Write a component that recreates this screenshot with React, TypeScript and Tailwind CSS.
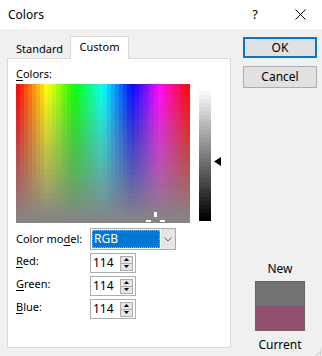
import React from 'react';

const font = { fontFamily: '"Noto Sans", "Open Sans", sans-serif' };

// hue/saturation field, drawn as blocks like the Windows picker
const Spectrum: React.FC = () => {
  const cols = 44;
  const rows = 23;
  const w = 174 / cols;
  const h = 139 / rows;
  const cells: React.ReactNode[] = [];
  for (let r = 0; r < rows; r++) {
    for (let c = 0; c < cols; c++) {
      const hue = (c / (cols - 1)) * 360;
      const sat = 100 - (r / (rows - 1)) * 100;
      cells.push(
        <rect
          key={`${r}-${c}`}
          x={c * w}
          y={r * h}
          width={w + 0.5}
          height={h + 0.5}
          fill={`hsl(${hue} ${sat}% 52%)`}
        />
      );
    }
  }
  return (
    <div className="relative w-[174px] h-[139px]">
      <svg width="174" height="139" viewBox="0 0 174 139" shapeRendering="crispEdges" className="block">
        {cells}
      </svg>
      {/* crosshair */}
      <div className="absolute left-[138px] top-[128px] w-[3px] h-[5px] bg-white" />
      <div className="absolute left-[130px] top-[136px] w-[5px] h-[2px] bg-white" />
      <div className="absolute left-[144px] top-[136px] w-[5px] h-[2px] bg-white" />
    </div>
  );
};

const LumBar: React.FC = () => {
  const bands = 34;
  const bh = 134 / bands;
  return (
    <svg width="12" height="134" viewBox="0 0 12 134" shapeRendering="crispEdges" className="block">
      {Array.from({ length: bands }).map((_, i) => {
        const v = Math.round(255 - (i / (bands - 1)) * 255);
        return <rect key={i} x={0} y={i * bh} width={12} height={bh + 0.5} fill={`rgb(${v},${v},${v})`} />;
      })}
    </svg>
  );
};

const Spin: React.FC<{ value: string }> = ({ value }) => (
  <div className="w-[46px] h-[20px] border border-[#adadad] bg-white flex items-center">
    <span className="pl-[2px] text-[12px] text-black flex-1 leading-none">{value}</span>
    <div className="w-[13px] h-[15px] mr-[2px] flex flex-col border border-[#adadad] bg-[#e5e5e5]">
      <div className="flex-1 flex items-center justify-center border-b border-[#adadad]">
        <svg width="5" height="3" viewBox="0 0 5 3"><path d="M2.5 0 L5 3 L0 3 Z" fill="#000" /></svg>
      </div>
      <div className="flex-1 flex items-center justify-center">
        <svg width="5" height="3" viewBox="0 0 5 3"><path d="M0 0 L5 0 L2.5 3 Z" fill="#000" /></svg>
      </div>
    </div>
  </div>
);

const Row: React.FC<{ label: React.ReactNode; value: string }> = ({ label, value }) => (
  <div className="flex mt-[3px] h-[20px]">
    <div className="w-[74px] text-[11px] leading-[16px]">{label}</div>
    <Spin value={value} />
  </div>
);

export default function App() {
  return (
    <div className="w-[322px] h-[356px] bg-[#f0f0f0] text-black relative overflow-hidden" style={font}>
      {/* Title bar */}
      <div className="h-[29px] bg-white flex items-center">
        <span className="pl-[8px] text-[12px] flex-1">Colors</span>
        <span className="text-[13px] mr-[37px]">?</span>
        <svg width="11" height="11" viewBox="0 0 11 11" className="mr-[16px]">
          <path d="M0.5 0.5 L10.5 10.5 M10.5 0.5 L0.5 10.5" stroke="#000" strokeWidth="1" />
        </svg>
      </div>

      <div className="flex">
        {/* Left: tabs + panel */}
        <div className="ml-[7px] mt-[7px] w-[224px]">
          <div className="flex items-end h-[22px] relative z-10">
            <div className="w-[63px] h-[18px] flex items-center justify-center text-[11px] pl-[2px]">Standard</div>
            <div className="w-[59px] h-[23px] -mb-px bg-white border-x border-t border-[#d9d9d9] flex items-center justify-center text-[11px] pb-[2px]">
              Custom
            </div>
          </div>
          <div className="h-[290px] bg-white border border-[#d9d9d9] px-[8px] pt-[7px]">
            <div className="text-[11px] leading-[16px] mb-[2px]">
              <u className="underline-offset-2">C</u>olors:
            </div>
            <div className="flex">
              <Spectrum />
              <div className="ml-[9px] mt-[3px]">
                <LumBar />
              </div>
              <div className="ml-[3px] mt-[73px]">
                <svg width="7" height="9" viewBox="0 0 7 9"><path d="M0 4.5 L7 0 L7 9 Z" fill="#000" /></svg>
              </div>
            </div>

            <div className="flex items-center mt-[5px] h-[22px]">
              <div className="w-[74px] text-[11px]">
                Color mo<u className="underline-offset-2">d</u>el:
              </div>
              <div className="w-[86px] h-[22px] border border-[#adadad] bg-white flex">
                <div className="m-px w-[68px] bg-[#0078d7] text-white text-[12px] leading-[18px] pl-[2px] outline-1 outline-dotted outline-[#f0a040] -outline-offset-1">
                  RGB
                </div>
                <div className="flex-1 bg-[#e5e5e5] flex items-center justify-center">
                  <svg width="8" height="5" viewBox="0 0 8 5"><path d="M0.5 0.5 L4 4 L7.5 0.5" stroke="#606060" fill="none" /></svg>
                </div>
              </div>
            </div>

            <Row label={<><u className="underline-offset-2">R</u>ed:</>} value="114" />
            <Row label={<><u className="underline-offset-2">G</u>reen:</>} value="114" />
            <Row label={<><u className="underline-offset-2">B</u>lue:</>} value="114" />
          </div>
        </div>

        {/* Right column */}
        <div className="ml-[12px] w-[74px] flex flex-col items-center">
          <button className="mt-[8px] w-[74px] h-[21px] border-2 border-[#0078d7] bg-[#e1e1e1] text-[12px] flex items-center justify-center">
            OK
          </button>
          <button className="mt-[8px] w-[74px] h-[22px] border border-[#adadad] bg-[#e1e1e1] text-[12px] flex items-center justify-center">
            Cancel
          </button>
          <div className="mt-[173px] text-[12px] leading-[16px]">New</div>
          <div className="mt-[4px] w-[50px] h-[50px] border border-[#646464] flex flex-col">
            <div className="flex-1 bg-[#727272]" />
            <div className="flex-1 bg-[#934f70]" />
          </div>
          <div className="mt-[6px] text-[12px] leading-[16px]">Current</div>
        </div>
      </div>

      {/* resize grip */}
      <svg width="6" height="6" viewBox="0 0 6 6" className="absolute right-0 bottom-0">
        <rect x="4" y="0" width="1" height="1" fill="#b0b0b0" />
        <rect x="2" y="2" width="1" height="1" fill="#b0b0b0" />
        <rect x="4" y="2" width="1" height="1" fill="#b0b0b0" />
        <rect x="0" y="4" width="1" height="1" fill="#b0b0b0" />
        <rect x="2" y="4" width="1" height="1" fill="#b0b0b0" />
        <rect x="4" y="4" width="1" height="1" fill="#b0b0b0" />
      </svg>
    </div>
  );
}
